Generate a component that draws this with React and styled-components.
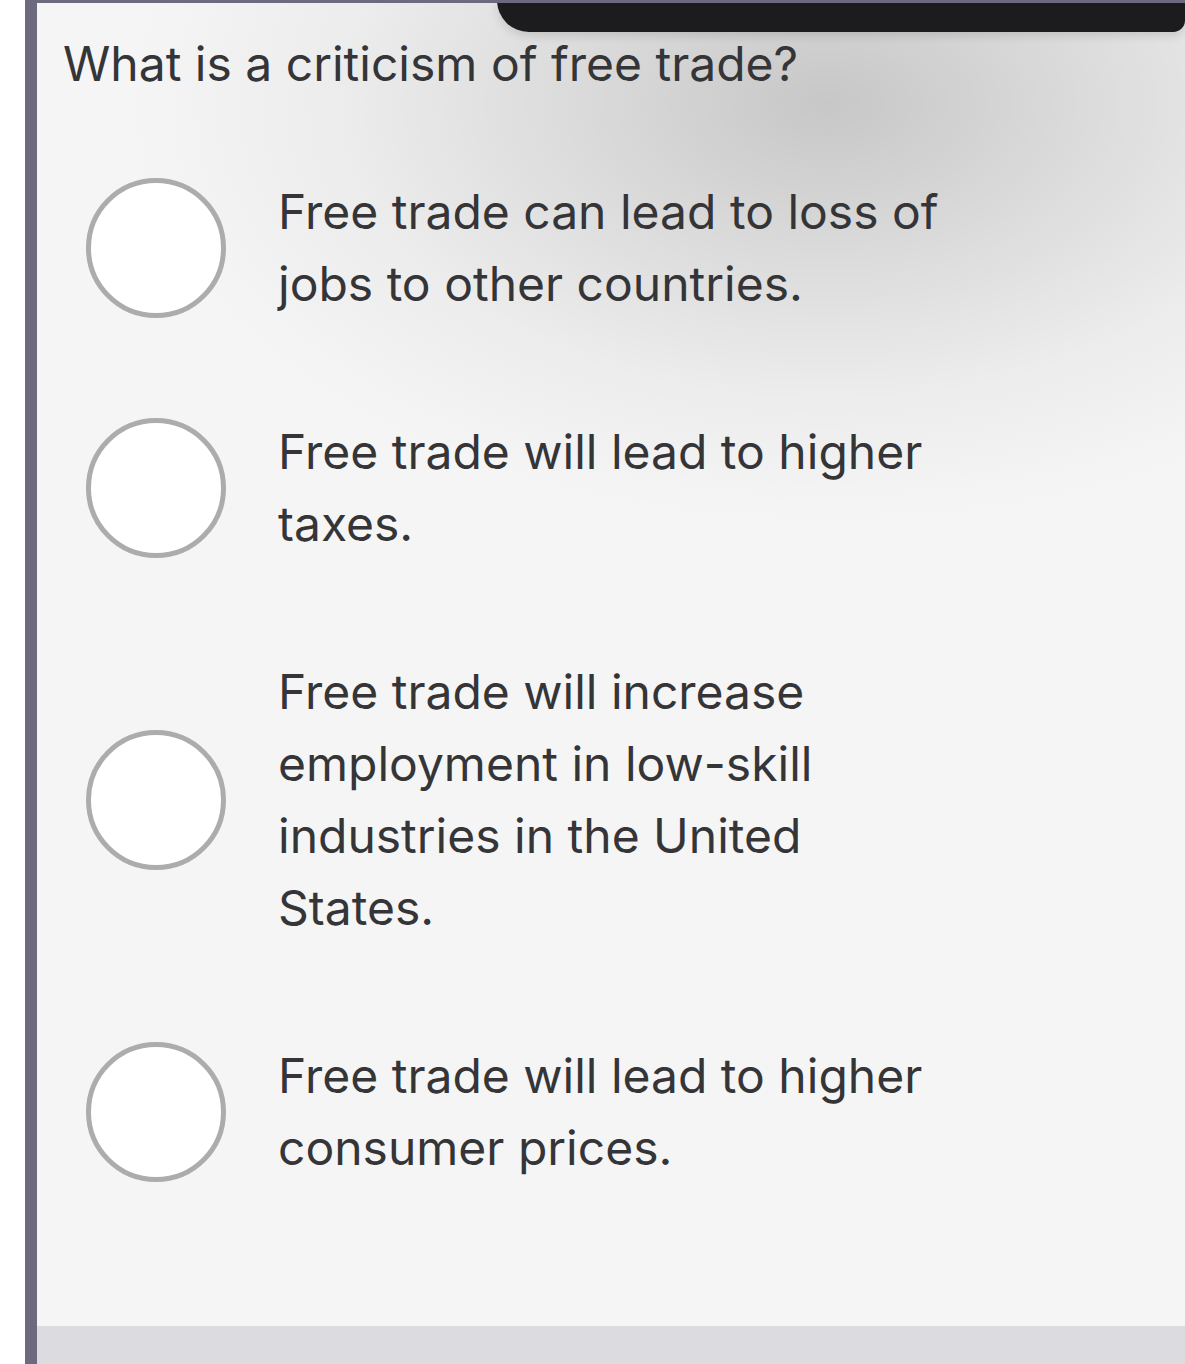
import React from 'react'
import styled, { createGlobalStyle } from 'styled-components'

const GlobalStyle = createGlobalStyle`
  html, body {
    margin: 0;
    padding: 0;
    background: #ffffff;
  }
  body {
    font-family: Inter, "Noto Sans", "Liberation Sans", sans-serif;
    -webkit-font-smoothing: antialiased;
  }
`

const options = [
  'Free trade can lead to loss of jobs to other countries.',
  'Free trade will lead to higher taxes.',
  'Free trade will increase employment in low-skill industries in the United States.',
  'Free trade will lead to higher consumer prices.'
]

const Frame = styled.div`
  display: flex;
  height: 1364px;
  padding-left: 25px;
  box-sizing: border-box;
  overflow: hidden;
`

const Rail = styled.div`
  width: 12px;
  flex-shrink: 0;
  background: #6b6a7f;
`

// the soft dark glow under the notch is part of the panel background
const Panel = styled.div`
  position: relative;
  flex: 1;
  display: flex;
  flex-direction: column;
  border-top: 3px solid #6b6a7f;
  background:
    radial-gradient(
      ellipse 700px 420px at 790px 100px,
      rgba(0, 0, 0, 0.19) 0%,
      rgba(0, 0, 0, 0.11) 35%,
      rgba(0, 0, 0, 0.035) 70%,
      rgba(0, 0, 0, 0) 100%
    ),
    #f5f5f6;
  overflow: hidden;
`

const Notch = styled.div`
  position: absolute;
  top: -3px;
  left: 460px;
  right: 0;
  height: 32px;
  background: #1c1c1e;
  border-radius: 0 0 14px 38px;
  box-shadow: 0 4px 10px rgba(0, 0, 0, 0.12);
`

const Content = styled.div`
  flex: 1;
  padding: 25px 0 0 26px;
`

const Question = styled.h1`
  margin: 0;
  font-size: 48px;
  font-weight: 400;
  line-height: 72px;
  color: #353538;
`

const OptionList = styled.div`
  display: flex;
  flex-direction: column;
  gap: 96px;
  margin-top: 76px;
  padding-left: 23px;
`

const Row = styled.label`
  display: flex;
  align-items: center;
  gap: 52px;
`

const Radio = styled.span`
  width: 140px;
  height: 140px;
  box-sizing: border-box;
  border-radius: 50%;
  border: 5px solid #acacac;
  background: #ffffff;
  flex-shrink: 0;
`

const OptionText = styled.span`
  width: 672px;
  font-size: 48px;
  line-height: 72px;
  color: #353538;
`

const BottomBar = styled.div`
  height: 38px;
  background: #dcdbe0;
  flex-shrink: 0;
`

export default function App() {
  return (
    <>
      <GlobalStyle />
      <Frame>
        <Rail />
        <Panel>
          <Notch />
          <Content>
            <Question>What is a criticism of free trade?</Question>
            <OptionList>
              {options.map(text => (
                <Row key={text}>
                  <Radio />
                  <OptionText>{text}</OptionText>
                </Row>
              ))}
            </OptionList>
          </Content>
          <BottomBar />
        </Panel>
      </Frame>
    </>
  )
}
